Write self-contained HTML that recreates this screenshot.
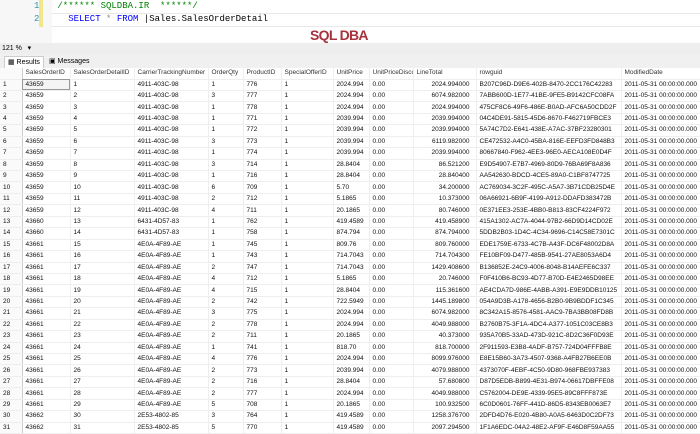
<!DOCTYPE html>
<html><head><style>
body{margin:0;width:700px;height:434px;overflow:hidden;background:#fff;font-family:"Liberation Sans",sans-serif;position:relative}
.ed{position:absolute;left:0;top:0;width:700px;height:43px;background:#fff}
.gut{position:absolute;left:0;top:0;width:52px;height:43px;background:#f7f7f7}
.yb{position:absolute;left:39px;top:0;width:4px;height:27px;background:#f0e68c}
.ln{position:absolute;left:34px;font:9px "Liberation Mono",monospace;color:#2b91af}
.code{position:absolute;left:52px;font:9px "Liberation Mono",monospace;white-space:pre}
.l2{position:absolute;left:52px;top:13px;width:648px;height:12px;border-top:1px solid #e8e8e8;border-bottom:1px solid #e8e8e8}
.logo{position:absolute;left:310px;top:27px;font:bold 14px "Liberation Sans",sans-serif;color:#a8323c;letter-spacing:-0.7px}
.zb{position:absolute;left:0;top:43px;width:700px;height:11px;background:#eee;border-bottom:1px solid #ddd}
.zb span{position:absolute;left:2px;top:1px;font-size:7px}
.tabs{position:absolute;left:0;top:54px;width:700px;height:14px;background:#f0f0f0}
.tab{position:absolute;top:2px;font-size:7px;height:11px;line-height:11px;padding:0 3px}
table{position:absolute;left:0;top:68px;width:706px;border-collapse:collapse;table-layout:fixed;font-size:6.5px;color:#111}
td{height:11.45px;padding:0 0 0 3px;border-right:1px solid #eee;border-bottom:1px solid #eee;white-space:nowrap;overflow:hidden;line-height:10px;box-sizing:border-box}
tr.h td{height:11px;color:#333}
td:first-child{background:#fafafa;border-right:1px solid #ccc}
td.r{text-align:right;padding-right:6px}
.sel{outline:1px solid #999;outline-offset:-1px;background:#f4f4f4}
</style></head><body>
<div class="ed"><div class="gut"></div><div class="yb"></div><div class="l2"></div>
<div class="ln" style="top:1px">1</div><div class="ln" style="top:14px">2</div>
<div class="code" style="top:1px;color:#008000"> /****** SQLDBA.IR  ******/</div>
<div class="code" style="top:14px">   <span style="color:#00f">SELECT</span> <span style="color:#888">*</span> <span style="color:#00f">FROM</span> |Sales.SalesOrderDetail</div>
<div class="logo">SQL DBA</div></div>
<div class="zb"><span>121 % &nbsp;&nbsp;▾</span></div>
<div class="tabs"><div class="tab" style="left:4px;background:#fff;border:1px solid #ccc;border-bottom:none">▦ Results</div><div class="tab" style="left:46px">▣ Messages</div></div>
<table>
<colgroup><col style="width:22px"><col style="width:48px"><col style="width:64px"><col style="width:74px"><col style="width:35px"><col style="width:38px"><col style="width:52px"><col style="width:36px"><col style="width:44px"><col style="width:63px"><col style="width:145px"><col style="width:85px"></colgroup>
<tr class="h"><td></td><td>SalesOrderID</td><td>SalesOrderDetailID</td><td>CarrierTrackingNumber</td><td>OrderQty</td><td>ProductID</td><td>SpecialOfferID</td><td>UnitPrice</td><td>UnitPriceDiscount</td><td>LineTotal</td><td>rowguid</td><td>ModifiedDate</td></tr>
<tr><td>1</td><td class="sel">43659</td><td>1</td><td>4911-403C-98</td><td>1</td><td>776</td><td>1</td><td>2024.994</td><td>0.00</td><td class="r">2024.994000</td><td>B207C96D-D9E6-402B-8470-2CC176C42283</td><td>2011-05-31 00:00:00.000</td></tr>
<tr><td>2</td><td>43659</td><td>2</td><td>4911-403C-98</td><td>3</td><td>777</td><td>1</td><td>2024.994</td><td>0.00</td><td class="r">6074.982000</td><td>7ABB600D-1E77-41BE-9FE5-B9142CFC08FA</td><td>2011-05-31 00:00:00.000</td></tr>
<tr><td>3</td><td>43659</td><td>3</td><td>4911-403C-98</td><td>1</td><td>778</td><td>1</td><td>2024.994</td><td>0.00</td><td class="r">2024.994000</td><td>475CF8C6-49F6-486E-B0AD-AFC6A50CDD2F</td><td>2011-05-31 00:00:00.000</td></tr>
<tr><td>4</td><td>43659</td><td>4</td><td>4911-403C-98</td><td>1</td><td>771</td><td>1</td><td>2039.994</td><td>0.00</td><td class="r">2039.994000</td><td>04C4DE91-5815-45D6-8670-F462719FBCE3</td><td>2011-05-31 00:00:00.000</td></tr>
<tr><td>5</td><td>43659</td><td>5</td><td>4911-403C-98</td><td>1</td><td>772</td><td>1</td><td>2039.994</td><td>0.00</td><td class="r">2039.994000</td><td>5A74C7D2-E641-438E-A7AC-37BF23280301</td><td>2011-05-31 00:00:00.000</td></tr>
<tr><td>6</td><td>43659</td><td>6</td><td>4911-403C-98</td><td>3</td><td>773</td><td>1</td><td>2039.994</td><td>0.00</td><td class="r">6119.982000</td><td>CE472532-A4C0-45BA-816E-EEFD3FD848B3</td><td>2011-05-31 00:00:00.000</td></tr>
<tr><td>7</td><td>43659</td><td>7</td><td>4911-403C-98</td><td>1</td><td>774</td><td>1</td><td>2039.994</td><td>0.00</td><td class="r">2039.994000</td><td>80667840-F962-4EE3-96E0-AECA108E0D4F</td><td>2011-05-31 00:00:00.000</td></tr>
<tr><td>8</td><td>43659</td><td>8</td><td>4911-403C-98</td><td>3</td><td>714</td><td>1</td><td>28.8404</td><td>0.00</td><td class="r">86.521200</td><td>E9D54907-E7B7-4969-80D9-76BA69F8A836</td><td>2011-05-31 00:00:00.000</td></tr>
<tr><td>9</td><td>43659</td><td>9</td><td>4911-403C-98</td><td>1</td><td>716</td><td>1</td><td>28.8404</td><td>0.00</td><td class="r">28.840400</td><td>AA542630-BDCD-4CE5-89A0-C1BF8747725</td><td>2011-05-31 00:00:00.000</td></tr>
<tr><td>10</td><td>43659</td><td>10</td><td>4911-403C-98</td><td>6</td><td>709</td><td>1</td><td>5.70</td><td>0.00</td><td class="r">34.200000</td><td>AC769034-3C2F-495C-A5A7-3B71CDB25D4E</td><td>2011-05-31 00:00:00.000</td></tr>
<tr><td>11</td><td>43659</td><td>11</td><td>4911-403C-98</td><td>2</td><td>712</td><td>1</td><td>5.1865</td><td>0.00</td><td class="r">10.373000</td><td>06A66921-6B9F-4199-A912-DDAFD383472B</td><td>2011-05-31 00:00:00.000</td></tr>
<tr><td>12</td><td>43659</td><td>12</td><td>4911-403C-98</td><td>4</td><td>711</td><td>1</td><td>20.1865</td><td>0.00</td><td class="r">80.746000</td><td>0E371EE3-253E-4BB0-B813-83CF4224F972</td><td>2011-05-31 00:00:00.000</td></tr>
<tr><td>13</td><td>43660</td><td>13</td><td>6431-4D57-83</td><td>1</td><td>762</td><td>1</td><td>419.4589</td><td>0.00</td><td class="r">419.458900</td><td>415A1302-AC7A-4044-97B2-66D9D14CD02E</td><td>2011-05-31 00:00:00.000</td></tr>
<tr><td>14</td><td>43660</td><td>14</td><td>6431-4D57-83</td><td>1</td><td>758</td><td>1</td><td>874.794</td><td>0.00</td><td class="r">874.794000</td><td>5DDB2B03-1D4C-4C34-9696-C14C58E7301C</td><td>2011-05-31 00:00:00.000</td></tr>
<tr><td>15</td><td>43661</td><td>15</td><td>4E0A-4F89-AE</td><td>1</td><td>745</td><td>1</td><td>809.76</td><td>0.00</td><td class="r">809.760000</td><td>EDE1759E-6733-4C7B-A43F-DC6F48002D8A</td><td>2011-05-31 00:00:00.000</td></tr>
<tr><td>16</td><td>43661</td><td>16</td><td>4E0A-4F89-AE</td><td>1</td><td>743</td><td>1</td><td>714.7043</td><td>0.00</td><td class="r">714.704300</td><td>FE10BF09-D477-485B-9541-27AE8053A6D4</td><td>2011-05-31 00:00:00.000</td></tr>
<tr><td>17</td><td>43661</td><td>17</td><td>4E0A-4F89-AE</td><td>2</td><td>747</td><td>1</td><td>714.7043</td><td>0.00</td><td class="r">1429.408600</td><td>B136852E-24C9-4006-8048-B14AEFE6C337</td><td>2011-05-31 00:00:00.000</td></tr>
<tr><td>18</td><td>43661</td><td>18</td><td>4E0A-4F89-AE</td><td>4</td><td>712</td><td>1</td><td>5.1865</td><td>0.00</td><td class="r">20.746000</td><td>F0F410B6-BC93-4D77-B70D-E4E2465D98EE</td><td>2011-05-31 00:00:00.000</td></tr>
<tr><td>19</td><td>43661</td><td>19</td><td>4E0A-4F89-AE</td><td>4</td><td>715</td><td>1</td><td>28.8404</td><td>0.00</td><td class="r">115.361600</td><td>AE4CDA7D-986E-4ABB-A391-E9E9DDB10125</td><td>2011-05-31 00:00:00.000</td></tr>
<tr><td>20</td><td>43661</td><td>20</td><td>4E0A-4F89-AE</td><td>2</td><td>742</td><td>1</td><td>722.5949</td><td>0.00</td><td class="r">1445.189800</td><td>054A9D3B-A178-4656-B2B0-9B9BDDF1C345</td><td>2011-05-31 00:00:00.000</td></tr>
<tr><td>21</td><td>43661</td><td>21</td><td>4E0A-4F89-AE</td><td>3</td><td>775</td><td>1</td><td>2024.994</td><td>0.00</td><td class="r">6074.982000</td><td>8C342A15-8576-4581-AAC9-7BA3BB08FD8B</td><td>2011-05-31 00:00:00.000</td></tr>
<tr><td>22</td><td>43661</td><td>22</td><td>4E0A-4F89-AE</td><td>2</td><td>778</td><td>1</td><td>2024.994</td><td>0.00</td><td class="r">4049.988000</td><td>B2760B75-3F1A-4DC4-A377-1051C03CE8B3</td><td>2011-05-31 00:00:00.000</td></tr>
<tr><td>23</td><td>43661</td><td>23</td><td>4E0A-4F89-AE</td><td>2</td><td>711</td><td>1</td><td>20.1865</td><td>0.00</td><td class="r">40.373000</td><td>935A70B5-33AD-473D-921C-8D2C36F0D93E</td><td>2011-05-31 00:00:00.000</td></tr>
<tr><td>24</td><td>43661</td><td>24</td><td>4E0A-4F89-AE</td><td>1</td><td>741</td><td>1</td><td>818.70</td><td>0.00</td><td class="r">818.700000</td><td>2F911593-E3B8-4ADF-B757-724D04FFFB8E</td><td>2011-05-31 00:00:00.000</td></tr>
<tr><td>25</td><td>43661</td><td>25</td><td>4E0A-4F89-AE</td><td>4</td><td>776</td><td>1</td><td>2024.994</td><td>0.00</td><td class="r">8099.976000</td><td>E8E15B60-3A73-4507-9368-A4FB27B6EE0B</td><td>2011-05-31 00:00:00.000</td></tr>
<tr><td>26</td><td>43661</td><td>26</td><td>4E0A-4F89-AE</td><td>2</td><td>773</td><td>1</td><td>2039.994</td><td>0.00</td><td class="r">4079.988000</td><td>4373070F-4EBF-4C50-9D80-968FBE937383</td><td>2011-05-31 00:00:00.000</td></tr>
<tr><td>27</td><td>43661</td><td>27</td><td>4E0A-4F89-AE</td><td>2</td><td>716</td><td>1</td><td>28.8404</td><td>0.00</td><td class="r">57.680800</td><td>D87D5EDB-B899-4E31-B974-06617DBFFE08</td><td>2011-05-31 00:00:00.000</td></tr>
<tr><td>28</td><td>43661</td><td>28</td><td>4E0A-4F89-AE</td><td>2</td><td>777</td><td>1</td><td>2024.994</td><td>0.00</td><td class="r">4049.988000</td><td>C5762004-DE9E-4339-95E5-89C8FFF873E</td><td>2011-05-31 00:00:00.000</td></tr>
<tr><td>29</td><td>43661</td><td>29</td><td>4E0A-4F89-AE</td><td>5</td><td>708</td><td>1</td><td>20.1865</td><td>0.00</td><td class="r">100.932500</td><td>6C0D0601-76FF-441D-86D5-8343EB0063E7</td><td>2011-05-31 00:00:00.000</td></tr>
<tr><td>30</td><td>43662</td><td>30</td><td>2E53-4802-85</td><td>3</td><td>764</td><td>1</td><td>419.4589</td><td>0.00</td><td class="r">1258.376700</td><td>2DFD4D76-E020-4B80-A0A5-6463D0C2DF73</td><td>2011-05-31 00:00:00.000</td></tr>
<tr><td>31</td><td>43662</td><td>31</td><td>2E53-4802-85</td><td>5</td><td>770</td><td>1</td><td>419.4589</td><td>0.00</td><td class="r">2097.294500</td><td>1F1A6EDC-04A2-48E2-AF9F-E46D8F59AA55</td><td>2011-05-31 00:00:00.000</td></tr>
</table>
</body></html>
